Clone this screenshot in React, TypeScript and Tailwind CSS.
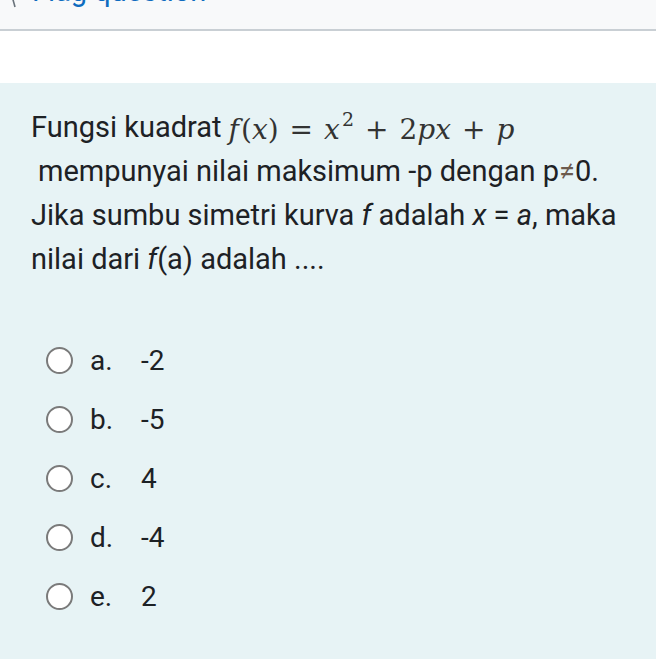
import React from "react";

const options = [
  { l: "a.", v: "-2" },
  { l: "b.", v: "-5" },
  { l: "c.", v: "4" },
  { l: "d.", v: "-4" },
  { l: "e.", v: "2" },
];

const serif = { fontFamily: "'DejaVu Serif', 'Liberation Serif', serif" };

export default function App() {
  return (
    <div className="w-[656px] h-[659px] overflow-hidden bg-white" style={{ fontFamily: "Roboto, 'Noto Sans', sans-serif" }}>
      <div className="h-[31px] bg-[#f8f9fa] border-b-2 border-[#c9cfd4] overflow-hidden flex items-start">
        <div className="flex items-start -mt-[24px] pl-[10px]">
          <svg width="12" height="32" viewBox="0 0 12 32">
            <path d="M2 20 L5 31" stroke="#6a737b" strokeWidth="1.6" fill="none" />
          </svg>
          <span className="ml-[10px] text-[29px] leading-[30px] text-[#0f6cbf]">Flag question</span>
        </div>
      </div>
      <div className="h-[52px] bg-white" />
      <div className="bg-[#e7f3f5] h-full pl-[31px] pt-[22px] text-[#1d2125]">
        <div className="text-[29px] leading-[44px]">
          <div className="flex items-center h-[44px]">
            <span>Fungsi kuadrat</span>
            <span className="ml-[7px] text-[28px] text-[#333333] italic leading-none flex items-baseline mt-[6px]" style={serif}>
              <span>f</span>
              <span className="not-italic ml-[2px]">(</span>
              <span>x</span>
              <span className="not-italic">)</span>
              <span className="not-italic mx-[11px]">=</span>
              <span>x</span>
              <span className="not-italic text-[19px] relative -top-[13px] ml-[2px]">2</span>
              <span className="not-italic mx-[11px]">+</span>
              <span className="not-italic">2</span>
              <span>px</span>
              <span className="not-italic mx-[11px]">+</span>
              <span>p</span>
            </span>
          </div>
          <div className="pl-[7px]">
            mempunyai nilai maksimum -p dengan p<span className="text-[#6b5a4e]">≠</span>0.
          </div>
          <div>
            Jika sumbu simetri kurva <i>f</i> adalah <i>x</i> = <i>a</i>, maka
          </div>
          <div>
            nilai dari <i>f</i>(a) adalah ....
          </div>
        </div>
        <div className="mt-[66px] flex flex-col gap-[32px] pl-[15px]">
          {options.map((o) => (
            <div key={o.l} className="flex items-center h-[27px]">
              <span className="w-[27px] h-[27px] rounded-full border-2 border-[#7a7a7a] bg-white shrink-0" />
              <span className="ml-[17px] w-[51px] text-[28px]">{o.l}</span>
              <span className="text-[28px]">{o.v}</span>
            </div>
          ))}
        </div>
      </div>
    </div>
  );
}
